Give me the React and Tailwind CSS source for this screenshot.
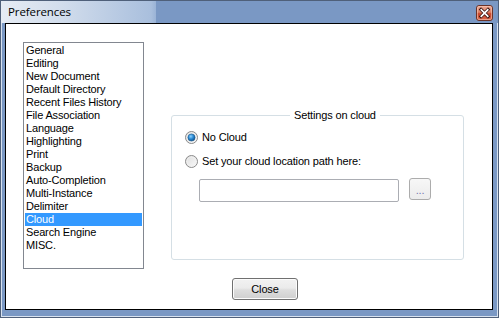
import React from "react";

function Radio({ checked }) {
  return (
    <svg width="13" height="13" viewBox="0 0 13 13" className="shrink-0">
      <defs>
        <linearGradient id="rbg" x1="0" y1="0" x2="1" y2="1">
          <stop offset="0" stopColor="#dcdcdc" />
          <stop offset="1" stopColor="#fbfbfb" />
        </linearGradient>
        <radialGradient id="rdot" cx="0.4" cy="0.35" r="0.7">
          <stop offset="0" stopColor="#8fd3ff" />
          <stop offset="0.5" stopColor="#2a8ad4" />
          <stop offset="1" stopColor="#0b4c85" />
        </radialGradient>
      </defs>
      <circle cx="6.5" cy="6.5" r="6" fill="url(#rbg)" stroke="#8a8a8a" strokeWidth="1" />
      <circle cx="6.5" cy="6.5" r="4.5" fill="none" stroke="#f0f0f0" strokeWidth="0.8" />
      {checked && <circle cx="6.5" cy="6.5" r="3.6" fill="url(#rdot)" stroke="#1e5a8c" strokeWidth="0.6" />}
    </svg>
  );
}

function CloseIcon() {
  return (
    <svg width="17" height="16" viewBox="0 0 17 16" className="mt-[2px]">
      <defs>
        <linearGradient id="cbg" x1="0" y1="0" x2="0" y2="1">
          <stop offset="0" stopColor="#efae9a" />
          <stop offset="0.45" stopColor="#dc7f64" />
          <stop offset="0.55" stopColor="#c7432a" />
          <stop offset="1" stopColor="#dc6a4c" />
        </linearGradient>
      </defs>
      <rect x="0.5" y="0.5" width="16" height="15" rx="2.5" fill="url(#cbg)" stroke="#6b3328" />
      <rect x="1.5" y="1.5" width="14" height="13" rx="1.5" fill="none" stroke="#f6c8b8" strokeOpacity="0.6" />
      <path d="M5 4.5 L12 11.5 M12 4.5 L5 11.5" stroke="#3d1610" strokeWidth="3.2" strokeLinecap="square" />
      <path d="M5.3 4.8 L11.7 11.2 M11.7 4.8 L5.3 11.2" stroke="#ffffff" strokeWidth="1.7" strokeLinecap="square" />
    </svg>
  );
}

const items = [
  "General",
  "Editing",
  "New Document",
  "Default Directory",
  "Recent Files History",
  "File Association",
  "Language",
  "Highlighting",
  "Print",
  "Backup",
  "Auto-Completion",
  "Multi-Instance",
  "Delimiter",
  "Cloud",
  "Search Engine",
  "MISC.",
];

export default function App() {
  return (
    <div className="w-[499px] h-[318px] border border-[#4f607a] bg-[#7a98c4] flex flex-col font-['Liberation_Sans',sans-serif] text-[11px] tracking-[-0.15px] text-black shadow-[inset_0_0_0_1px_#d8e2ef]">
      <div className="h-[22px] flex items-center justify-between pl-[7px] pr-[5px] bg-[linear-gradient(90deg,#e6ecf4_0px,#d2ddec_60px,#a9bfdd_150px,#9ab3d6_155px,#7a98c4_155px)]">
        <span className="font-['Open_Sans',sans-serif] text-[11.5px] text-black leading-none tracking-[-0.1px] mt-[-1px]">Preferences</span>
        <CloseIcon />
      </div>
      <div className="ml-[4px] mr-[5px] mb-[7px] h-[287px] border border-black bg-white pl-[17px] pt-[18px] flex flex-col">
        <div className="flex items-start">
          <div className="w-[121px] h-[227px] border border-[#828790] p-[1px] flex flex-col">
            {items.map((t) => (
              <div
                key={t}
                className={
                  t === "Cloud"
                    ? "h-[13px] leading-[13px] pl-[1px] bg-[#3399ff] text-white whitespace-nowrap"
                    : "h-[13px] leading-[13px] pl-[1px] whitespace-nowrap"
                }
              >
                {t}
              </div>
            ))}
          </div>
          <div className="ml-[27px] mt-[73px] w-[293px] h-[145px] rounded-[3px] border border-[#d5dfe5] relative pl-[13px] pt-[15px] flex flex-col">
            <span className="absolute left-[118px] top-[-7px] bg-white px-[4px] leading-[13px]">Settings on cloud</span>
            <div className="flex items-center h-[13px] gap-[4px]">
              <Radio checked />
              <span className="leading-[13px]">No Cloud</span>
            </div>
            <div className="flex items-center h-[13px] gap-[4px] mt-[11px]">
              <Radio />
              <span className="leading-[13px]">Set your cloud location path here:</span>
            </div>
            <div className="flex items-start ml-[14px] mt-[10px]">
              <div className="w-[200px] h-[23px] mt-[1px] border border-[#abadb3] rounded-[2px] bg-white" />
              <div className="ml-[10px] w-[22px] h-[22px] border border-[#acacac] rounded-[3px] bg-[linear-gradient(180deg,#f7f7f7,#ececec)] flex items-center justify-center text-[#7777b0] leading-none pt-[3px]">
                ...
              </div>
            </div>
          </div>
        </div>
        <div className="ml-[209px] mt-[9px] w-[66px] h-[22px] rounded-[3px] border border-[#707070] bg-[linear-gradient(180deg,#f2f2f2_0%,#ebebeb_45%,#dddddd_55%,#cfcfcf_100%)] shadow-[inset_0_0_0_1px_#fcfcfc] flex items-center justify-center">
          Close
        </div>
      </div>
    </div>
  );
}
